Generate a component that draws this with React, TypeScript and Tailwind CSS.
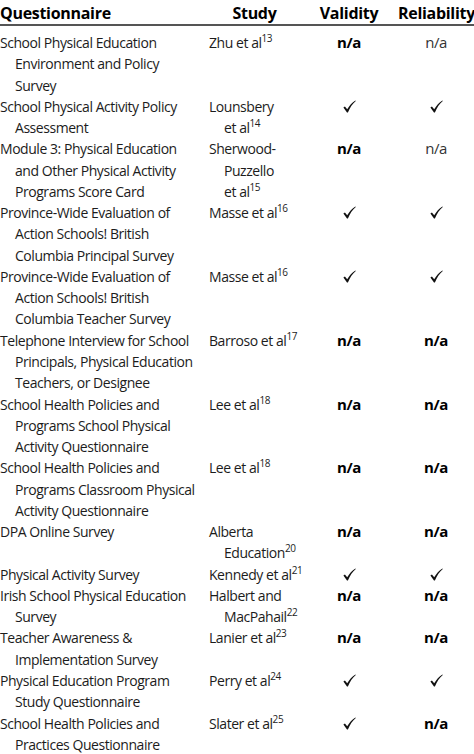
import React from 'react'

type Mark = 'check' | 'na' | 'na-light'

type Row = {
  q: string[]
  study: string[]
  sup: string
  validity: Mark
  reliability: Mark
}

const rows: Row[] = [
  { q: ['School Physical Education', 'Environment and Policy', 'Survey'], study: ['Zhu et al'], sup: '13', validity: 'na', reliability: 'na-light' },
  { q: ['School Physical Activity Policy', 'Assessment'], study: ['Lounsbery', 'et al'], sup: '14', validity: 'check', reliability: 'check' },
  { q: ['Module 3: Physical Education', 'and Other Physical Activity', 'Programs Score Card'], study: ['Sherwood-', 'Puzzello', 'et al'], sup: '15', validity: 'na', reliability: 'na-light' },
  { q: ['Province-Wide Evaluation of', 'Action Schools! British', 'Columbia Principal Survey'], study: ['Masse et al'], sup: '16', validity: 'check', reliability: 'check' },
  { q: ['Province-Wide Evaluation of', 'Action Schools! British', 'Columbia Teacher Survey'], study: ['Masse et al'], sup: '16', validity: 'check', reliability: 'check' },
  { q: ['Telephone Interview for School', 'Principals, Physical Education', 'Teachers, or Designee'], study: ['Barroso et al'], sup: '17', validity: 'na', reliability: 'na' },
  { q: ['School Health Policies and', 'Programs School Physical', 'Activity Questionnaire'], study: ['Lee et al'], sup: '18', validity: 'na', reliability: 'na' },
  { q: ['School Health Policies and', 'Programs Classroom Physical', 'Activity Questionnaire'], study: ['Lee et al'], sup: '18', validity: 'na', reliability: 'na' },
  { q: ['DPA Online Survey'], study: ['Alberta', 'Education'], sup: '20', validity: 'na', reliability: 'na' },
  { q: ['Physical Activity Survey'], study: ['Kennedy et al'], sup: '21', validity: 'check', reliability: 'check' },
  { q: ['Irish School Physical Education', 'Survey'], study: ['Halbert and', 'MacPahail'], sup: '22', validity: 'na', reliability: 'na' },
  { q: ['Teacher Awareness &', 'Implementation Survey'], study: ['Lanier et al'], sup: '23', validity: 'na', reliability: 'na' },
  { q: ['Physical Education Program', 'Study Questionnaire'], study: ['Perry et al'], sup: '24', validity: 'check', reliability: 'check' },
  { q: ['School Health Policies and', 'Practices Questionnaire'], study: ['Slater et al'], sup: '25', validity: 'check', reliability: 'na' },
]

// thin calligraphic tick, heavier on the short stroke
function Tick() {
  return (
    <svg width="13" height="13" viewBox="0 0 13 13" className="inline-block align-[-1px]">
      <path
        d="M0.4 7.4 L1.9 6.4 L4.2 9.2 C6.4 5.6 9 2.6 12.4 0.4 L12.8 0.9 C9.6 3.6 7 7.2 4.9 12.4 L4 12.4 Z"
        fill="#111"
      />
    </svg>
  )
}

function Cell({ mark }: { mark: Mark }) {
  if (mark === 'check') return <Tick />
  if (mark === 'na') {
    return <span className="text-[15px] font-bold text-black">n/a</span>
  }
  return <span className="text-[15px] text-[#333]">n/a</span>
}

function Lines({ lines, sup }: { lines: string[]; sup?: string }) {
  return (
    <div>
      {lines.map((l, i) => (
        <div key={i} className={`whitespace-nowrap ${i > 0 ? 'pl-[15px]' : ''}`}>
          {l}
          {sup && i === lines.length - 1 && <sup className="text-[10px] -top-[6px]">{sup}</sup>}
        </div>
      ))}
    </div>
  )
}

export default function App() {
  return (
    <div className="w-[474px] h-[754px] overflow-hidden bg-white font-['Open_Sans',sans-serif] text-[14px] leading-[21.27px] tracking-[-0.45px] text-[#1c1c1c]">
      <div className="grid grid-cols-[209px_91px_98px_76px] pt-[3px] h-[26px] border-b-2 border-[#555] text-[16px] leading-[21px] font-bold text-black tracking-[-0.3px]">
        <div className="whitespace-nowrap">Questionnaire</div>
        <div className="text-center">Study</div>
        <div className="text-center">Validity</div>
        <div className="text-center whitespace-nowrap">Reliability</div>
      </div>
      <div className="pt-[6px]">
        {rows.map((r, i) => (
          <div key={i} className="grid grid-cols-[209px_91px_98px_76px]">
            <Lines lines={r.q} />
            <Lines lines={r.study} sup={r.sup} />
            <div className="text-center"><Cell mark={r.validity} /></div>
            <div className="text-center"><Cell mark={r.reliability} /></div>
          </div>
        ))}
      </div>
    </div>
  )
}
